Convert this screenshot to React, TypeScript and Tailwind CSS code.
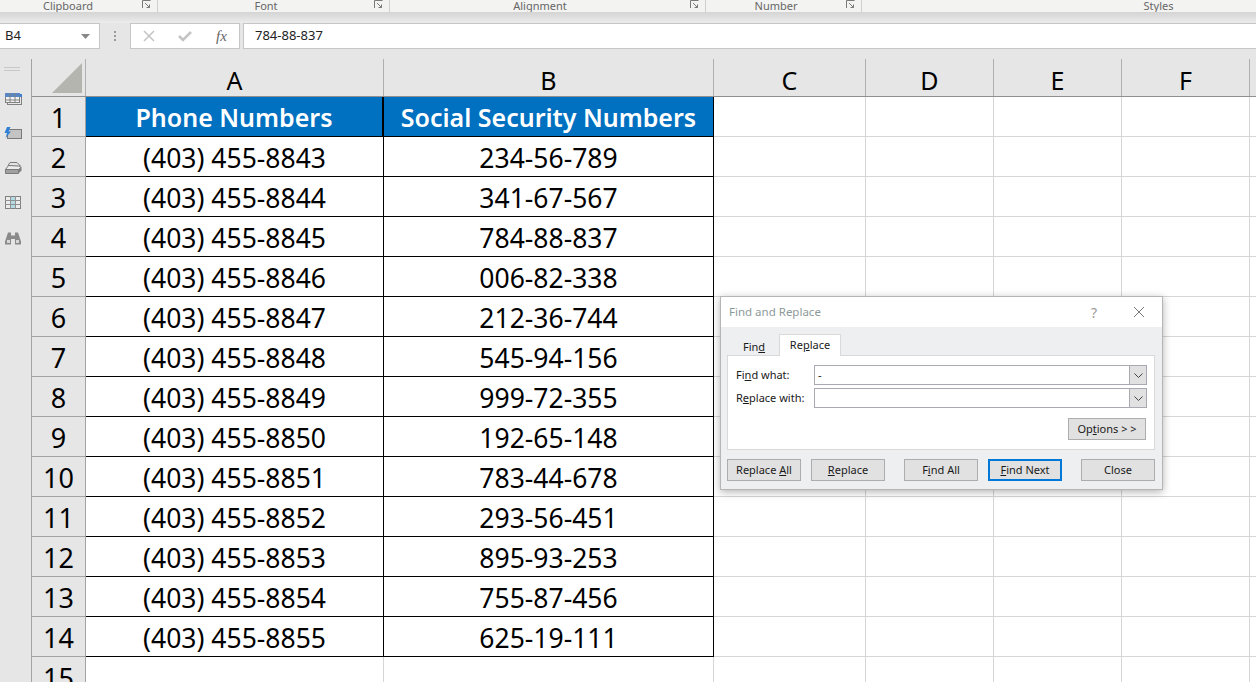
import { ReactNode } from 'react';

const font = "font-['Noto_Sans',sans-serif]";
const dlgFont = "font-['Noto_Sans',sans-serif] text-[11px] text-[#1a1a1a]";

const rows = [
  ['(403) 455-8843', '234-56-789'],
  ['(403) 455-8844', '341-67-567'],
  ['(403) 455-8845', '784-88-837'],
  ['(403) 455-8846', '006-82-338'],
  ['(403) 455-8847', '212-36-744'],
  ['(403) 455-8848', '545-94-156'],
  ['(403) 455-8849', '999-72-355'],
  ['(403) 455-8850', '192-65-148'],
  ['(403) 455-8851', '783-44-678'],
  ['(403) 455-8852', '293-56-451'],
  ['(403) 455-8853', '895-93-253'],
  ['(403) 455-8854', '755-87-456'],
  ['(403) 455-8855', '625-19-111'],
];

const Launcher = () => (
  <svg width="9" height="9" viewBox="0 0 9 9" className="shrink-0 mr-[6px]" fill="none" stroke="#7a7a7a" strokeWidth="1">
    <path d="M0.5 8V0.5H8.5M3 3l4.5 4.5M7.5 4.5v3h-3" />
  </svg>
);

const RibbonGroup = ({ label, width, launcher = true, pad = '' }: { label: string; width: string; launcher?: boolean; pad?: string }) => (
  <div className={`${width} shrink-0 h-full flex items-start border-r border-[#d0d0d0]`}>
    <span className={`flex-1 text-center text-[11px] leading-[11px] text-[#666] ${pad}`}>{label}</span>
    {launcher && <Launcher />}
  </div>
);

const EmptyCells = () => (
  <>
    <div className="w-[152px] border-r border-b border-[#d6d6d6]" />
    <div className="w-[128px] border-r border-b border-[#d6d6d6]" />
    <div className="w-[128px] border-r border-b border-[#d6d6d6]" />
    <div className="w-[128px] border-r border-b border-[#d6d6d6]" />
    <div className="flex-1 border-b border-[#d6d6d6]" />
  </>
);

const RowHead = ({ n }: { n: number }) => (
  <div className="w-[54px] shrink-0 bg-[#e6e6e6] border-r border-b border-[#a3a3a3] flex items-center justify-center text-[27px] text-black pt-[3px]">
    {n}
  </div>
);

const ColHead = ({ label, width }: { label: string; width: string }) => (
  <div className={`${width} shrink-0 border-r border-[#b0b0b0] flex items-center justify-center text-[25px] text-black pt-[6px]`}>
    {label}
  </div>
);

const DlgButton = ({ children, width = 'w-[74px]', focus }: { children: ReactNode; width?: string; focus?: boolean }) => (
  <div
    className={`${width} h-[22px] flex items-center justify-center bg-[#e1e1e1] ${
      focus ? 'border-2 border-[#0078d7]' : 'border border-[#adadad]'
    }`}
  >
    {children}
  </div>
);

const Combo = ({ value }: { value?: string }) => (
  <div className="w-[333px] h-[20px] flex bg-white border border-[#a9a9b3]">
    <span className="flex-1 pl-[3px] leading-[18px]">{value}</span>
    <div className="w-[17px] bg-[#e1e1e1] border-l border-[#a9a9b3] flex items-center justify-center">
      <svg width="9" height="5" viewBox="0 0 9 5" fill="none" stroke="#444" strokeWidth="1">
        <path d="M0.5 0.5l4 4 4-4" />
      </svg>
    </div>
  </div>
);

const SideIcons = () => (
  <div className="flex flex-col items-start pl-[4px] pt-[8px]">
    <div className="w-[16px] h-[4px] border-y border-[#c8c8c8] mb-[22px]" />
    <svg width="17" height="12" viewBox="0 0 17 12" className="mb-[22px] ml-[1px]">
      <rect x="2.5" y="3.5" width="14" height="8" fill="#e8e8e8" stroke="#808080" />
      <rect x="0.5" y="0.5" width="14" height="9" fill="#f4f4f4" stroke="#808080" />
      <rect x="0" y="0" width="15" height="4" fill="#5b86c4" />
      <path d="M5 0v10M10 0v10M0 7h15" stroke="#808080" strokeWidth="1" />
      <path d="M15 1h2v3h-2z" fill="#3f7fd0" />
    </svg>
    <svg width="18" height="12" viewBox="0 0 18 12" className="mb-[23px]">
      <rect x="3.5" y="2.5" width="14" height="9" fill="#c4c4c4" stroke="#7a7a7a" />
      <path d="M6.5 0H3L0.5 6H3L1.5 11 7 4.5H4.5z" fill="#2f7fd6" />
    </svg>
    <svg width="17" height="12" viewBox="0 0 17 12" className="mb-[22px] ml-[1px]">
      <path d="M0.5 7.5h13v4h-13z" fill="#a0a0a0" stroke="#7a7a7a" />
      <path d="M13.5 7.5l3-3v4l-3 3z" fill="#808080" />
      <path d="M0.5 7.5l3-4h10l2.5 2-2.5 2z" fill="#ececec" stroke="#7a7a7a" />
      <path d="M3 3.5l2-3h7l3.5 3.5-2 0z" fill="#e4e4e4" stroke="#7a7a7a" />
    </svg>
    <svg width="16" height="13" viewBox="0 0 16 13" className="mb-[23px] ml-[1px]">
      <rect x="0.5" y="0.5" width="15" height="12" fill="#ececec" stroke="#808080" />
      <rect x="5" y="1" width="5" height="11" fill="#b4dbe4" />
      <path d="M5.5 0v13M10.5 0v13M0 4.5h16M0 8.5h16" stroke="#909090" strokeWidth="1" />
    </svg>
    <svg width="16" height="13" viewBox="0 0 16 13" className="ml-[1px]">
      <path d="M3 0.5h3v3h4v-3h3l3 9v3h-6V7H6v5.5H0v-3z" fill="#8a8a8a" />
      <rect x="2" y="8" width="3" height="3" fill="#d8d8d8" />
      <rect x="11" y="8" width="3" height="3" fill="#d8d8d8" />
    </svg>
  </div>
);

const FindReplaceDialog = () => (
  <div className={`absolute left-[720px] top-[296px] w-[443px] h-[194px] bg-[#eeeff1] border border-[#b5b5b5] shadow-[0_2px_8px_rgba(0,0,0,0.3)] ${dlgFont}`}>
    <div className="h-[30px] bg-white flex items-center pl-[8px] pr-[17px] text-[11.5px] text-[#8d9a9a]">
      <span className="flex-1">Find and Replace</span>
      <span className="text-[14px] text-[#999] mr-[36px]">?</span>
      <svg width="12" height="12" viewBox="0 0 12 12" stroke="#777" strokeWidth="1">
        <path d="M1 1l10 10M11 1L1 11" />
      </svg>
    </div>
    <div className="flex pl-[8px] pt-[7px] h-[29px]">
      <div className="w-[50px] flex items-center justify-center pt-[4px]">
        <span>
          Fin<u>d</u>
        </span>
      </div>
      <div className="w-[62px] h-[22px] bg-white border border-b-0 border-[#d9d9d9] flex items-center justify-center relative z-10">
        <span>
          Re<u>p</u>lace
        </span>
      </div>
    </div>
    <div className="mx-[6px] -mt-[1px] w-[428px] h-[95px] bg-white border border-[#d9d9d9] pl-[8px] pr-[7px] pt-[9px]">
      <div className="flex items-center justify-between">
        <span>
          Fi<u>n</u>d what:
        </span>
        <Combo value="-" />
      </div>
      <div className="flex items-center justify-between mt-[3px]">
        <span>
          R<u>e</u>place with:
        </span>
        <Combo />
      </div>
      <div className="flex justify-end mt-[10px] pr-[1px]">
        <DlgButton width="w-[78px]">
          <span>
            Op<u>t</u>ions &gt; &gt;
          </span>
        </DlgButton>
      </div>
    </div>
    <div className="flex px-[6px] mt-[9px]">
      <DlgButton>
        <span>
          Replace <u>A</u>ll
        </span>
      </DlgButton>
      <div className="ml-[10px]">
        <DlgButton>
          <span>
            <u>R</u>eplace
          </span>
        </DlgButton>
      </div>
      <div className="ml-[19px]">
        <DlgButton>
          <span>
            F<u>i</u>nd All
          </span>
        </DlgButton>
      </div>
      <div className="ml-[10px]">
        <DlgButton focus>
          <span>
            <u>F</u>ind Next
          </span>
        </DlgButton>
      </div>
      <div className="ml-[19px]">
        <DlgButton>Close</DlgButton>
      </div>
    </div>
  </div>
);

export default function App() {
  return (
    <div className={`relative w-[1256px] h-[682px] overflow-hidden bg-[#e6e6e6] flex flex-col ${font}`}>
      {/* Ribbon bottom edge */}
      <div className="h-[12px] shrink-0 bg-[#f3f3f2] flex overflow-hidden">
        <RibbonGroup label="Clipboard" width="w-[158px]" pad="pr-[6px]" />
        <RibbonGroup label="Font" width="w-[232px]" />
        <RibbonGroup label="Alignment" width="w-[316px]" />
        <RibbonGroup label="Number" width="w-[156px]" />
        <RibbonGroup label="Styles" width="w-[594px]" launcher={false} />
      </div>
      <div className="h-[11px] shrink-0 bg-gradient-to-b from-[#d4d4d4] to-[#ececec]" />

      {/* Formula bar */}
      <div className="h-[26px] shrink-0 flex text-[13px] text-[#222]">
        <div className="w-[100px] bg-white border border-l-0 border-[#c6c6c6] flex items-center pl-[5px] pr-[9px]">
          <span className="flex-1">B4</span>
          <svg width="9" height="5" viewBox="0 0 9 5">
            <path d="M0 0h9L4.5 5z" fill="#888" />
          </svg>
        </div>
        <div className="w-[30px] flex flex-col items-center justify-center gap-[2px]">
          <div className="w-[2px] h-[2px] bg-[#9a9a9a]" />
          <div className="w-[2px] h-[2px] bg-[#9a9a9a]" />
          <div className="w-[2px] h-[2px] bg-[#9a9a9a]" />
        </div>
        <div className="w-[110px] bg-white border border-[#c6c6c6] flex items-center">
          <svg width="12" height="12" viewBox="0 0 12 12" className="ml-[12px]" stroke="#c4c4c4" strokeWidth="1.5">
            <path d="M1 1l10 10M11 1L1 11" />
          </svg>
          <svg width="14" height="12" viewBox="0 0 14 12" className="ml-[23px]" fill="none" stroke="#c4c4c4" strokeWidth="2.5">
            <path d="M1 6l4 4 8-8" />
          </svg>
          <span className="ml-[24px] font-['Liberation_Serif',serif] italic text-[15px] text-[#666]">fx</span>
        </div>
        <div className="w-[3px]" />
        <div className="flex-1 bg-white border border-r-0 border-[#c6c6c6] flex items-center pl-[11px]">784-88-837</div>
      </div>

      <div className="h-[10px] shrink-0" />

      {/* Sheet */}
      <div className="flex-1 flex min-h-0">
        <div className="w-[32px] shrink-0 border-r border-[#a3a3a3]">
          <SideIcons />
        </div>
        <div className="flex-1 flex flex-col">
          <div className="h-[38px] shrink-0 flex bg-[#e6e6e6] border-b border-[#8f8f8f]">
            <div className="w-[54px] shrink-0 border-r border-[#b0b0b0] flex items-end justify-end pr-[3px] pb-[3px]">
              <svg width="30" height="30" viewBox="0 0 30 30">
                <path d="M30 0v30H0z" fill="#b5b5b0" />
              </svg>
            </div>
            <ColHead label="A" width="w-[298px]" />
            <ColHead label="B" width="w-[330px]" />
            <ColHead label="C" width="w-[152px]" />
            <ColHead label="D" width="w-[128px]" />
            <ColHead label="E" width="w-[128px]" />
            <ColHead label="F" width="w-[128px]" />
          </div>

          <div className="h-[40px] shrink-0 flex bg-white">
            <RowHead n={1} />
            <div className="w-[298px] bg-[#0070c0] border-r-2 border-b border-black flex items-center justify-center pt-[3px] text-[25px] font-semibold text-white">
              Phone Numbers
            </div>
            <div className="w-[330px] bg-[#0070c0] border-r border-b border-black flex items-center justify-center pt-[3px] text-[25px] font-semibold text-white">
              Social Security Numbers
            </div>
            <EmptyCells />
          </div>

          {rows.map(([phone, ssn], i) => (
            <div key={phone} className="h-[40px] shrink-0 flex bg-white">
              <RowHead n={i + 2} />
              <div className="w-[298px] border-r border-b border-black flex items-center justify-center pt-[4px] text-[26.5px] text-black">
                {phone}
              </div>
              <div className="w-[330px] border-r border-b border-black flex items-center justify-center pt-[4px] text-[26.5px] text-black">
                {ssn}
              </div>
              <EmptyCells />
            </div>
          ))}

          <div className="h-[40px] shrink-0 flex bg-white">
            <RowHead n={15} />
            <div className="w-[298px] border-r border-[#d6d6d6]" />
            <div className="w-[330px] border-r border-[#d6d6d6]" />
            <EmptyCells />
          </div>
        </div>
      </div>

      <FindReplaceDialog />
    </div>
  );
}
